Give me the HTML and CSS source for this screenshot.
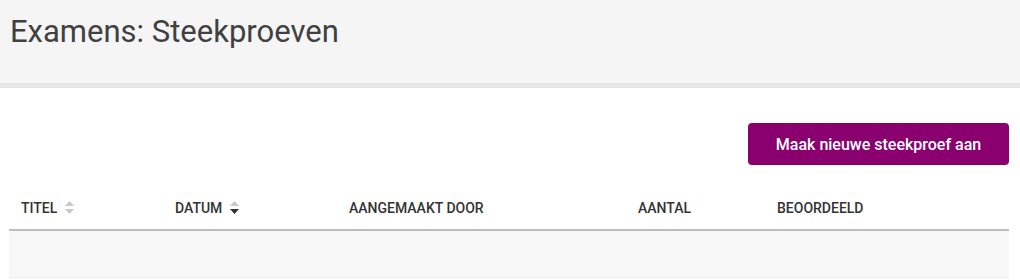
FILE: index.html
```html
<!DOCTYPE html>
<html lang="nl">
<head>
<meta charset="utf-8">
<title>Examens: Steekproeven</title>
<link rel="stylesheet" href="styles.css">
</head>
<body>
<header class="page-header">
  <h1 class="page-title">Examens: Steekproeven</h1>
</header>
<main class="content">
  <div class="toolbar">
    <button class="btn-primary" type="button">Maak nieuwe steekproef aan</button>
  </div>
  <table class="table">
    <thead>
      <tr>
        <th class="col-title"><span class="th-inner">Titel <svg class="sort" viewBox="0 0 11 15" width="11" height="15"><path d="M1 6 L5.5 1 L10 6 Z" fill="#c8c8c8"/><path d="M1 9 L5.5 14 L10 9 Z" fill="#c8c8c8"/></svg></span></th>
        <th class="col-date"><span class="th-inner">Datum <svg class="sort" viewBox="0 0 11 15" width="11" height="15"><path d="M1 6 L5.5 1 L10 6 Z" fill="#c8c8c8"/><path d="M1 9 L5.5 14 L10 9 Z" fill="#333"/></svg></span></th>
        <th class="col-author">Aangemaakt door</th>
        <th class="col-count">Aantal</th>
        <th class="col-graded">Beoordeeld</th>
      </tr>
    </thead>
    <tbody>
      <tr class="empty-row"><td colspan="5"></td></tr>
    </tbody>
  </table>
</main>
</body>
</html>
```
FILE: styles.css
```css
html, body {
  margin: 0;
  padding: 0;
  background: #ffffff;
  font-family: Roboto, "Liberation Sans", sans-serif;
  color: #333;
}
.page-header {
  background: #f5f5f5;
  border-bottom: 5px solid #e6e6e6;
  height: 83px;
  padding: 0 10px;
}
.page-title {
  margin: 0;
  padding-top: 14px;
  font-size: 31px;
  font-weight: 400;
  line-height: 36px;
  color: #404040;
}
.content {
  padding: 35px 11px 0 9px;
}
.toolbar {
  display: flex;
  justify-content: flex-end;
  margin-bottom: 21px;
}
.btn-primary {
  background: #8a006e;
  color: #fff;
  border: 0;
  border-radius: 4px;
  width: 261px;
  height: 42px;
  font-family: Roboto, "Liberation Sans", sans-serif;
  font-size: 16px;
  font-weight: 500;
  padding: 0;
}
.table {
  width: 1000px;
  border-collapse: collapse;
  table-layout: fixed;
}
.table th {
  box-sizing: border-box;
  text-align: left;
  font-size: 14px;
  font-weight: 500;
  text-transform: uppercase;
  color: #333;
  padding: 0 12px;
  height: 44px;
  border-bottom: 2px solid #bdbdbd;
  vertical-align: middle;
}
.th-inner {
  display: inline-flex;
  align-items: center;
  gap: 7px;
}
.sort { display: block; }
.col-title { width: 154px; }
.col-date { width: 174px; }
.col-author { width: 289px; }
.col-count { width: 139px; }
.empty-row td {
  background: #f8f8f8;
  height: 46px;
  padding: 0;
  border-bottom: 1px solid #ececec;
}
```
